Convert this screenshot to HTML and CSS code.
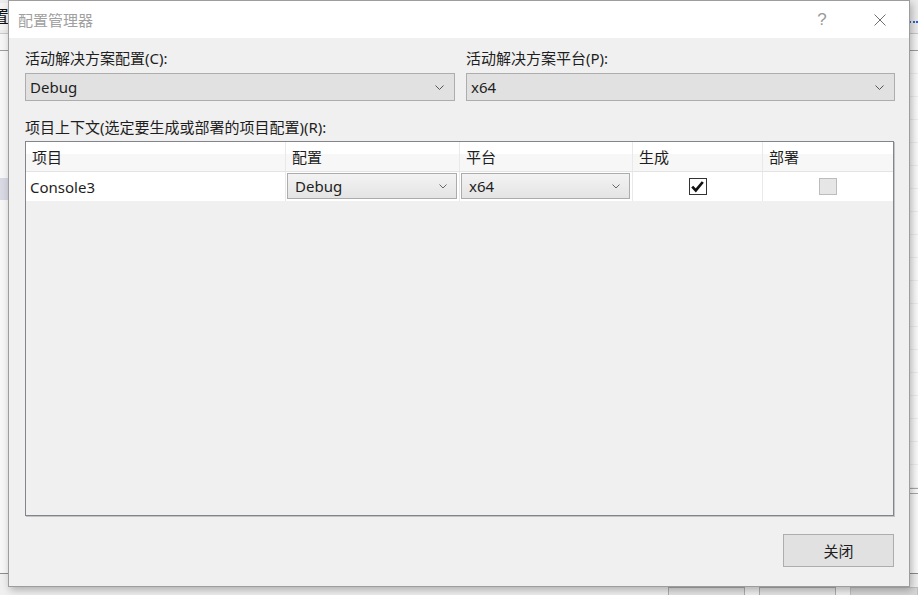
FILE: index.html
```html
<!DOCTYPE html>
<html lang="zh-CN">
<head>
  <meta charset="UTF-8" />
  <title>配置管理器</title>
  <link rel="stylesheet" href="styles.css">
</head>
<body>
  <!-- window behind the dialog -->
  <div class="app">
    <div class="app-menu">
      <span class="menu-item">置</span>
      <span class="menu-more"></span>
    </div>
    <div class="app-tools"></div>
    <div class="app-main">
      <div class="tree">
        <div class="tree-sel"></div>
      </div>
      <div class="list">
        <div class="list-row"></div>
        <div class="list-row"></div>
        <div class="list-row"></div>
        <div class="list-row"></div>
        <div class="list-row"></div>
        <div class="list-row"></div>
        <div class="list-row"></div>
        <div class="list-row"></div>
        <div class="list-row"></div>
        <div class="list-row"></div>
        <div class="list-row"></div>
        <div class="list-row"></div>
        <div class="list-row"></div>
        <div class="list-row"></div>
        <div class="list-row"></div>
        <div class="list-row"></div>
        <div class="list-row"></div>
        <div class="list-row"></div>
        <div class="list-row"></div>
        <div class="list-split"></div>
      </div>
    </div>
    <div class="app-foot">
      <span class="foot-btn"></span>
      <span class="foot-btn"></span>
      <span class="foot-btn dark"></span>
    </div>
  </div>

  <!-- configuration manager dialog -->
  <div class="dialog">
    <div class="titlebar">
      <span class="title">配置管理器</span>
      <span class="tb-help">?</span>
      <svg class="tb-close" width="12" height="12" viewBox="0 0 12 12">
        <path d="M0.5 0.5 L11.5 11.5 M11.5 0.5 L0.5 11.5" stroke="#6f6f6f" stroke-width="1" fill="none" />
      </svg>
    </div>

    <div class="dlg-body">
      <div class="pair">
        <div class="field">
          <div class="label">活动解决方案配置(C):</div>
          <div class="combo">
            <span>Debug</span>
            <svg width="9" height="5" viewBox="0 0 9 5"><polyline points="0.5,0.5 4.5,4.5 8.5,0.5" stroke="#555" fill="none" /></svg>
          </div>
        </div>
        <div class="field">
          <div class="label">活动解决方案平台(P):</div>
          <div class="combo">
            <span>x64</span>
            <svg width="9" height="5" viewBox="0 0 9 5"><polyline points="0.5,0.5 4.5,4.5 8.5,0.5" stroke="#555" fill="none" /></svg>
          </div>
        </div>
      </div>

      <div class="label ctx-label">项目上下文(选定要生成或部署的项目配置)(R):</div>

      <div class="grid">
        <div class="grid-row head">
          <div class="cell">项目</div>
          <div class="cell">配置</div>
          <div class="cell">平台</div>
          <div class="cell">生成</div>
          <div class="cell">部署</div>
        </div>
        <div class="grid-row item">
          <div class="cell name">Console3</div>
          <div class="cell pick">
            <div class="mini-combo">
              <span>Debug</span>
              <svg width="8" height="5" viewBox="0 0 8 5"><polyline points="0.5,0.5 4,4 7.5,0.5" stroke="#666" fill="none" /></svg>
            </div>
          </div>
          <div class="cell pick">
            <div class="mini-combo">
              <span>x64</span>
              <svg width="8" height="5" viewBox="0 0 8 5"><polyline points="0.5,0.5 4,4 7.5,0.5" stroke="#666" fill="none" /></svg>
            </div>
          </div>
          <div class="cell check">
            <span class="box on">
              <svg width="15" height="15" viewBox="0 0 15 15"><path d="M2.2 7.6 L5.8 11.4 L12.8 3" stroke="#111" stroke-width="2.7" fill="none" /></svg>
            </span>
          </div>
          <div class="cell check">
            <span class="box off"></span>
          </div>
        </div>
      </div>

      <div class="actions">
        <button class="btn">关闭</button>
      </div>
    </div>
  </div>
</body>
</html>
```

FILE: styles.css
```css
/* Reset & basic styling */
* {
  box-sizing: border-box;
  margin: 0;
  padding: 0;
}
body {
  width: 918px;
  height: 595px;
  overflow: hidden;
  position: relative;
  font-family: "Noto Sans", "Noto Sans CJK SC", sans-serif;
  font-size: 15px;
  color: #1e1e1e;
  background: #f5f5f5;
}

/* background window */
.app {
  height: 595px;
  display: flex;
  flex-direction: column;
}
.app-menu {
  height: 34px;
  background: #ececec;
  border-bottom: 1px solid #c9c9c9;
  display: flex;
  justify-content: space-between;
  align-items: center;
}
.menu-item {
  margin-left: -8px;
  font-size: 17px;
  color: #111;
  background: #f5f5f5;
  padding-bottom: 2px;
}
.menu-more {
  width: 12px;
  height: 2px;
  margin-top: 10px;
  border-top: 2px dotted #2f64c8;
}
.app-tools {
  height: 17px;
  background: #f6f6f6;
  border-bottom: 1px solid #9c9c9c;
}
.app-main {
  flex: 1;
  display: grid;
  grid-template-columns: 300px 1fr;
  background: #f7f7f7;
}
.tree-sel {
  margin-top: 127px;
  height: 22px;
  background: #d9d9e3;
}
.list {
  background: #fbfbfb;
}
.list-row {
  height: 23px;
  border-bottom: 1px solid #eeeeee;
}
.list-split {
  height: 6px;
  border-top: 1px solid #a9a9a9;
  border-bottom: 1px solid #a9a9a9;
}
.app-foot {
  height: 22px;
  border-top: 1px solid #8c8c8c;
  background: #f0f0f0;
  display: flex;
  gap: 14px;
  padding: 13px 0 0 668px;
}
.foot-btn {
  width: 80px;
  height: 30px;
  border: 1px solid #adadad;
  background: #e4e4e4;
}
.foot-btn.dark {
  width: 70px;
  background: #d6d6d6;
  border-color: #c0c0c0;
}

/* dialog */
.dialog {
  position: absolute;
  left: 8px;
  top: 0;
  width: 902px;
  height: 587px;
  background: #f0f0f0;
  border: 1px solid #9d9d9d;
  box-shadow: 2px 3px 8px rgba(0, 0, 0, 0.28);
  display: flex;
  flex-direction: column;
}
.titlebar {
  height: 37px;
  background: #fff;
  display: flex;
  align-items: center;
  padding: 0 23px 0 9px;
}
.title {
  flex: 1;
  color: #a0a0a0;
  line-height: 20px;
}
.tb-help {
  width: 20px;
  text-align: center;
  color: #9a9a9a;
  font-family: "Liberation Sans", sans-serif;
  font-size: 17px;
  margin-right: 42px;
}
.dlg-body {
  flex: 1;
  padding: 10px 14px 0 16px;
  display: flex;
  flex-direction: column;
}
.label {
  line-height: 20px;
  height: 20px;
  white-space: nowrap;
}
.pair {
  display: grid;
  grid-template-columns: 430px 1fr;
  gap: 11px;
}
.field .label {
  margin-bottom: 5px;
}
.combo {
  height: 28px;
  background: #e1e1e1;
  border: 1px solid #adadad;
  display: flex;
  align-items: center;
  justify-content: space-between;
  padding: 0 10px 0 4px;
  line-height: 20px;
}
.ctx-label {
  margin-top: 16px;
}

/* project grid */
.grid {
  margin-top: 4px;
  margin-right: 1px;
  height: 375px;
  border: 1px solid #82858c;
  box-shadow: 1px 1px 0 #c4c4c4;
  background: #f0f0f0;
}
.grid-row {
  display: grid;
  grid-template-columns: 260px 174px 173px 130px 1fr;
}
.grid-row.head {
  height: 30px;
  background: linear-gradient(#fff 0 40%, #f7f7f7 40%);
  border-bottom: 1px solid #e3e3e3;
}
.grid-row.item {
  height: 29px;
  background: #fff;
}
.cell {
  border-right: 1px solid #e9e9e9;
  display: flex;
  align-items: center;
  line-height: 20px;
}
.cell:last-child {
  border-right: none;
}
.head .cell {
  padding-left: 6px;
}
.cell.name {
  padding-left: 4px;
}
.cell.pick {
  padding: 1px 2px 2px 1px;
  align-items: stretch;
}
.mini-combo {
  flex: 1;
  border: 1px solid #acacac;
  background: linear-gradient(#f3f3f3, #e4e4e4);
  display: flex;
  align-items: center;
  justify-content: space-between;
  padding: 0 9px 0 7px;
}
.cell.check {
  justify-content: center;
  padding-bottom: 1px;
}
.box {
  width: 18px;
  height: 17px;
  display: flex;
  align-items: center;
  justify-content: center;
}
.box.on {
  border: 1px solid #333;
  background: #fff;
}
.box.off {
  border: 1px solid #bcbcbc;
  background: #e6e6e6;
}

/* footer button */
.actions {
  display: flex;
  justify-content: flex-end;
  margin-top: 18px;
  padding-right: 1px;
}
.btn {
  width: 111px;
  height: 33px;
  border: 1px solid #adadad;
  background: #e1e1e1;
  font-family: "Noto Sans", "Noto Sans CJK SC", sans-serif;
  font-size: 15px;
  color: #1e1e1e;
  cursor: pointer;
}
```
